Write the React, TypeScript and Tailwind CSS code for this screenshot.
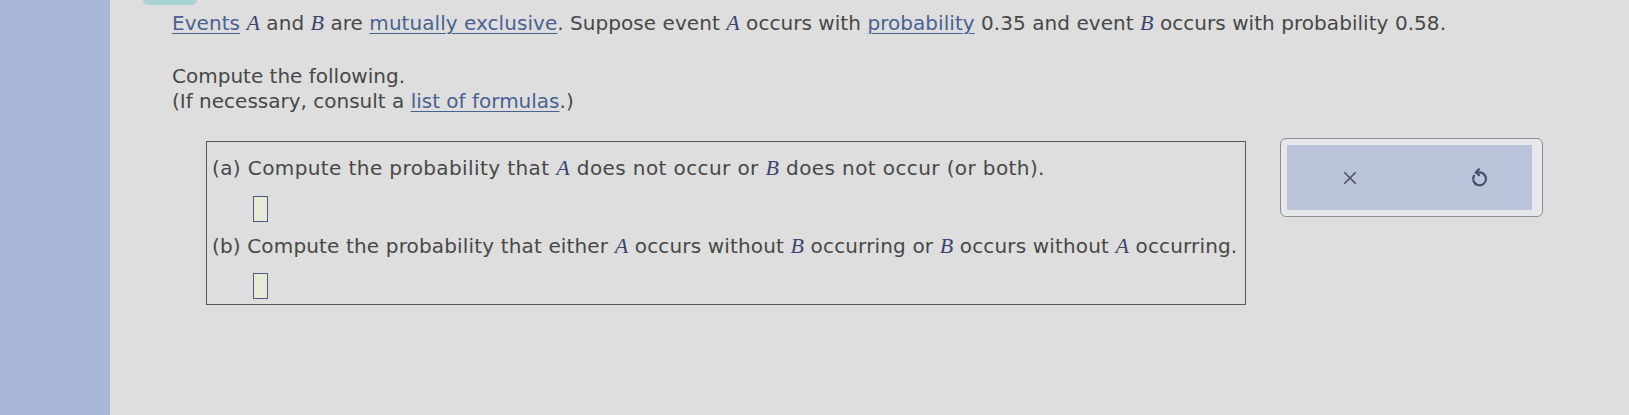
import React from 'react'

const textFont = { fontFamily: '"DejaVu Sans", Verdana, sans-serif' }

function V({ children }: { children: React.ReactNode }) {
  // math variable, serif italic like the ALEKS renderer
  return <i className="font-['Liberation_Serif',serif] text-[22px] italic text-[#3d4470]">{children}</i>
}

function Link({ children }: { children: React.ReactNode }) {
  return <span className="text-[#4a6292] underline decoration-1 underline-offset-[3px]">{children}</span>
}

function AnswerBox() {
  return <div className="h-[26px] w-[15px] border border-[#4e5a86] bg-[#e6ead7]" />
}

function ClearIcon() {
  return (
    <svg width="18" height="18" viewBox="0 0 24 24" fill="none" stroke="#4c5168" strokeWidth="2.2" strokeLinecap="round">
      <path d="M5 5l14 14M19 5L5 19" />
    </svg>
  )
}

function UndoIcon() {
  return (
    <svg width="22" height="22" viewBox="0 0 24 24" fill="none" stroke="#454c6c" strokeWidth="2.4" strokeLinecap="round" strokeLinejoin="round">
      <path d="M6.5 9.5A7 7 0 1 0 11.5 6" />
      <path d="M12 2.5L8.5 5.8L12 8.8" />
    </svg>
  )
}

export default function App() {
  return (
    <div className="flex h-[415px] w-[1629px] overflow-hidden bg-[#dddedd] text-[20px] text-[#484848]" style={textFont}>
      <div className="w-[110px] shrink-0 bg-[#aab7d7]" />
      <div className="flex flex-1 flex-col">
        <div className="ml-[33px] h-[5px] w-[54px] rounded-b-[10px] bg-[#a9d3d5]" />
        <div className="ml-[62px] mt-[5px] leading-[25px]">
          <p className="tracking-[0.05px]">
            <Link>Events</Link> <V>A</V> and <V>B</V> are <Link>mutually exclusive</Link>. Suppose event <V>A</V> occurs with{' '}
            <Link>probability</Link> 0.35 and event <V>B</V> occurs with probability 0.58.
          </p>
          <p className="mt-[28px] leading-[25px]">
            Compute the following.
            <br />
            (If necessary, consult a <Link>list of formulas</Link>.)
          </p>
          <div className="mt-[27px] flex items-start">
            <div className="ml-[34px] h-[164px] w-[1040px] border border-[#5a5a5a] pl-[5px] pt-[13px] leading-[25px]">
              <p className="tracking-[0.4px]">
                (a) Compute the probability that <V>A</V> does not occur or <V>B</V> does not occur (or both).
              </p>
              <div className="ml-[41px] mt-[15px]">
                <AnswerBox />
              </div>
              <p className="mt-[11px] tracking-[0.15px]">
                (b) Compute the probability that either <V>A</V> occurs without <V>B</V> occurring or <V>B</V> occurs without{' '}
                <V>A</V> occurring.
              </p>
              <div className="ml-[41px] mt-[14px]">
                <AnswerBox />
              </div>
            </div>
            <div className="ml-[34px] mt-[-3px] h-[79px] w-[263px] rounded-[6px] border border-[#8a8d95] bg-[#e6e8ec] p-[6px] pr-[10px]">
              <div className="flex h-full items-center bg-[#bcc4dc]">
                <div className="flex w-[126px] justify-center">
                  <ClearIcon />
                </div>
                <div className="flex flex-1 justify-center pl-[12px]">
                  <UndoIcon />
                </div>
              </div>
            </div>
          </div>
        </div>
      </div>
    </div>
  )
}
